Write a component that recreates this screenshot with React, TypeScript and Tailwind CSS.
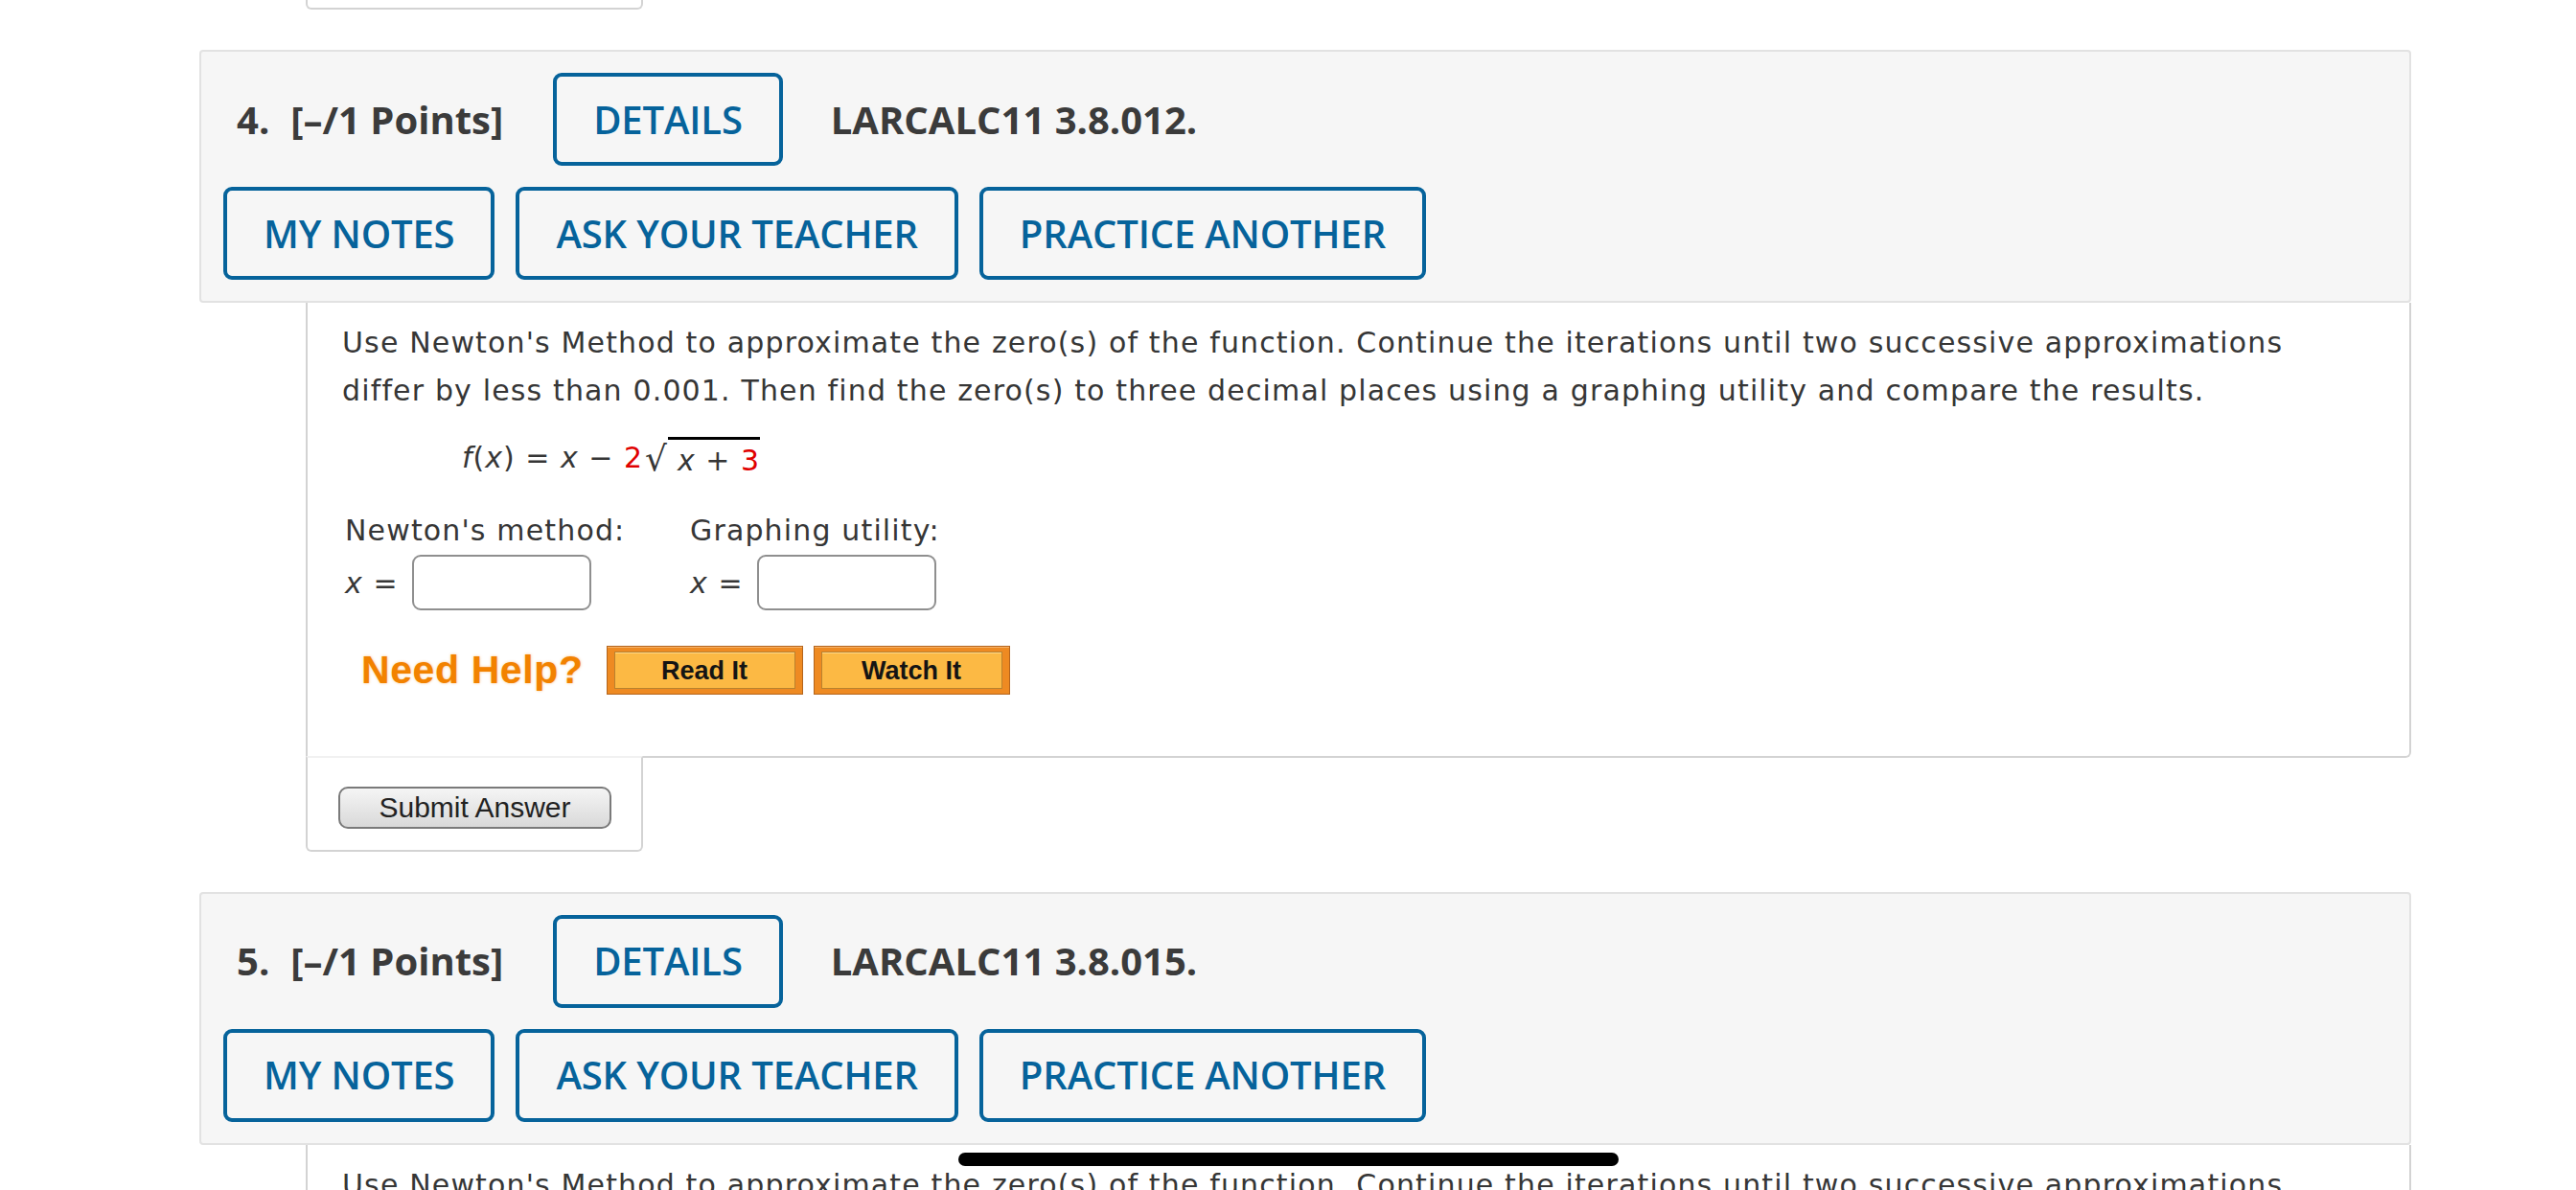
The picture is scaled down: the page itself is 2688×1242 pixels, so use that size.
import React from 'react';

const blue = 'border-[#06639b] text-[#06639b]';

function OutlineButton({ label, className = '' }: { label: string; className?: string }) {
  return (
    <button
      type="button"
      className={`flex h-[97px] items-center rounded-[9px] border-[4px] bg-[#f6f6f6] px-[38px] text-[40px] font-semibold tracking-[-0.15px] ${blue} ${className}`}
    >
      {label}
    </button>
  );
}

function HelpButton({ label }: { label: string }) {
  return (
    <button
      type="button"
      className="flex h-[51px] w-[205px] items-center justify-center border border-[#b4641c] bg-[#ee8a22] px-[7px] py-[5px] shadow-[inset_0_1px_0_#f7b36a]"
    >
      <span className="flex h-full w-full items-center justify-center border border-[#b9822e] bg-[#fcb944] text-[27px] font-bold text-[#141414] shadow-[inset_0_1px_0_#ffd889]">
        {label}
      </span>
    </button>
  );
}

function QuestionHeader({ num, code }: { num: number; code: string }) {
  return (
    <div className="flex flex-col gap-[22px] rounded-[4px] border-2 border-[#e2e2e2] bg-[#f6f6f6] px-[23px] py-[22px] font-['Open_Sans',sans-serif] text-[#3b3b3b]">
      <div className="flex items-center pl-[14px]">
        <span className="text-[40px] font-bold">{num}.</span>
        <span className="ml-[22px] text-[40px] font-bold">[–/1 Points]</span>
        <OutlineButton label="DETAILS" className="ml-[52px]" />
        <span className="ml-[50px] text-[40px] font-bold">{code}</span>
      </div>
      <div className="flex gap-[22px]">
        <OutlineButton label="MY NOTES" />
        <OutlineButton label="ASK YOUR TEACHER" />
        <OutlineButton label="PRACTICE ANOTHER" />
      </div>
    </div>
  );
}

function Prompt() {
  return (
    <p className="text-[30px] leading-[50px] tracking-[1.15px]">
      Use Newton's Method to approximate the zero(s) of the function. Continue the iterations until two successive approximations
      <br />
      differ by less than 0.001. Then find the zero(s) to three decimal places using a graphing utility and compare the results.
    </p>
  );
}

function AnswerInput() {
  return <input type="text" className="h-[58px] w-[187px] rounded-[9px] border-2 border-[#8f8f8f] bg-white" />;
}

function Question4Body() {
  return (
    <div className="ml-[111px]">
      <div className="rounded-br-[6px] border-x-2 border-b-2 border-[#d3d3d3] pb-[58px] pl-[36px] pr-[30px] pt-[17px] font-['DejaVu_Sans',sans-serif] text-[#363636]">
        <Prompt />
        <div className="mt-[18px] flex h-[52px] items-end pl-[125px] text-[30px] leading-[50px] tracking-[1px]">
          <span>
            <i>f</i>(<i>x</i>) = <i>x</i> − <span className="text-[#e00000]">2</span>
          </span>
          <span className="ml-[2px] text-[36px] leading-[48px]">√</span>
          <span className="border-t-[3px] border-black pl-[10px] leading-[44px]">
            <i>x</i> + <span className="text-[#e00000]">3</span>
          </span>
        </div>
        <div className="mt-[26px] grid grid-cols-[363px_auto] text-[30px] tracking-[1.15px]">
          <span className="pl-[3px] leading-[50px]">Newton's method:</span>
          <span className="leading-[50px]">Graphing utility:</span>
          <div className="flex items-center gap-[14px] pl-[3px]">
            <span>
              <i>x</i> =
            </span>
            <AnswerInput />
          </div>
          <div className="flex items-center gap-[14px]">
            <span>
              <i>x</i> =
            </span>
            <AnswerInput />
          </div>
        </div>
        <div className="mt-[32px] flex items-center pl-[20px] font-['Liberation_Sans',Arial,sans-serif]">
          <span className="text-[41px] font-bold tracking-[0.6px] text-[#f28200] [text-shadow:0_0_3px_rgba(242,130,0,0.45)]">
            Need Help?
          </span>
          <div className="ml-[24px] flex gap-[11px]">
            <HelpButton label="Read It" />
            <HelpButton label="Watch It" />
          </div>
        </div>
      </div>
      <div className="-mt-[2px] w-[352px] rounded-b-[6px] border-x-2 border-b-2 border-t-2 border-x-[#d3d3d3] border-b-[#d3d3d3] border-t-[#f1f1f1] bg-white pb-[22px] pl-[32px] pt-[30px]">
        <button
          type="button"
          className="h-[44px] w-[285px] rounded-[10px] border-2 border-[#7a7a7a] bg-gradient-to-b from-[#f5f5f5] to-[#d9d9d9] font-['Liberation_Sans',Arial,sans-serif] text-[30px] leading-none text-[#222]"
        >
          Submit Answer
        </button>
      </div>
    </div>
  );
}

export default function App() {
  return (
    <div className="relative h-[1242px] w-[2688px] overflow-hidden bg-white">
      <div className="w-[2516px] pl-[208px]">
        <div className="ml-[111px] h-[10px] w-[352px] rounded-b-[6px] border-x-2 border-b-2 border-[#d3d3d3]" />
        <div className="mt-[42px]">
          <QuestionHeader num={4} code="LARCALC11 3.8.012." />
          <Question4Body />
        </div>
        <div className="mt-[42px]">
          <QuestionHeader num={5} code="LARCALC11 3.8.015." />
          <div className="ml-[111px] border-x-2 border-[#d3d3d3] pl-[36px] pr-[30px] pt-[17px] font-['DejaVu_Sans',sans-serif] text-[#363636]">
            <Prompt />
          </div>
        </div>
      </div>
      <div className="absolute left-[1000px] top-[1203px] h-[14px] w-[689px] rounded-full bg-black" />
    </div>
  );
}
